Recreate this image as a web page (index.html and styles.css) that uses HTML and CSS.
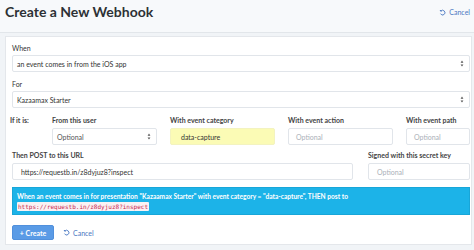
FILE: index.html
```html
<!DOCTYPE html>
<html>
<head>
<meta charset="utf-8">
<link rel="stylesheet" href="styles.css">
</head>
<body>
<div class="header">
  <h1 class="title">Create a New Webhook</h1>
  <a class="link header-cancel"><svg class="undo" viewBox="0 0 10 10"><path d="M2.6 3.2 A3.3 3.3 0 1 1 2.2 6.6" fill="none" stroke="currentColor" stroke-width="1.3"/><path d="M0.8 1.6 L3.6 1.4 L3.2 4.4 Z" fill="currentColor"/></svg>Cancel</a>
</div>
<div class="card">
  <div class="field">
    <div class="label">When</div>
    <div class="select"><span>an event comes in from the iOS app</span><svg class="arrows" viewBox="0 0 4 8"><path d="M2 0.5 L3.6 3 H0.4 Z M2 7.5 L3.6 5 H0.4 Z" fill="#555"/></svg></div>
  </div>
  <div class="field">
    <div class="label">For</div>
    <div class="select"><span>Kazaamax Starter</span><svg class="arrows" viewBox="0 0 4 8"><path d="M2 0.5 L3.6 3 H0.4 Z M2 7.5 L3.6 5 H0.4 Z" fill="#555"/></svg></div>
  </div>
  <div class="filters">
    <div class="label bold ifit">If it is:</div>
    <div class="col">
      <div class="label bold">From this user</div>
      <div class="select small"><span class="muted">Optional</span><svg class="arrows" viewBox="0 0 4 8"><path d="M2 0.5 L3.6 3 H0.4 Z M2 7.5 L3.6 5 H0.4 Z" fill="#555"/></svg></div>
    </div>
    <div class="col">
      <div class="label bold">With event category</div>
      <div class="input yellow">data-capture</div>
    </div>
    <div class="col">
      <div class="label bold">With event action</div>
      <div class="input placeholder">Optional</div>
    </div>
    <div class="col">
      <div class="label bold">With event path</div>
      <div class="input placeholder">Optional</div>
    </div>
  </div>
  <div class="post">
    <div class="col">
      <div class="label bold">Then POST to this URL</div>
      <div class="input url">https://requestb.in/z8dyjuz8?inspect</div>
    </div>
    <div class="col">
      <div class="label bold">Signed with this secret key</div>
      <div class="input placeholder url">Optional</div>
    </div>
  </div>
  <div class="alert">
    <div>When an event comes in for presentation "Kazaamax Starter" with event category = "data-capture", THEN post to</div>
    <code>https://requestb.in/z8dyjuz8?inspect</code>
  </div>
  <div class="actions">
    <button class="btn">+ Create</button>
    <a class="link"><svg class="undo" viewBox="0 0 10 10"><path d="M2.6 3.2 A3.3 3.3 0 1 1 2.2 6.6" fill="none" stroke="currentColor" stroke-width="1.3"/><path d="M0.8 1.6 L3.6 1.4 L3.2 4.4 Z" fill="currentColor"/></svg>Cancel</a>
  </div>
</div>
</body>
</html>
```
FILE: styles.css
```css
* { box-sizing: border-box; }
html, body { margin: 0; padding: 0; }
body {
  width: 474px;
  height: 250px;
  overflow: hidden;
  background: #f1f4f7;
  font-family: Lato, "Open Sans", sans-serif;
  color: #333;
}
.header {
  height: 33px;
  background: #f7f9fb;
  border-bottom: 1px solid #e2e6ea;
  display: flex;
  align-items: center;
  justify-content: space-between;
  padding: 0 4px 0 5px;
}
.title {
  margin: 0;
  font-size: 14px;
  font-weight: 700;
  color: #2d3135;
  position: relative;
  top: -5px;
}
.link {
  display: inline-flex;
  align-items: center;
  gap: 3px;
  font-size: 7px;
  color: #4a78c2;
}
.header-cancel { position: relative; top: -4px; }
.undo { width: 7px; height: 7px; }
.card {
  margin: 3px 2px 0 5px;
  background: #fff;
  border: 1px solid #e4e7eb;
  height: 209px;
  padding: 7px 1px 0 6px;
}
.label {
  font-size: 7px;
  line-height: 9px;
  color: #333;
  white-space: nowrap;
}
.bold { font-weight: 700; color: #444; }
.field { margin-bottom: 8px; }
.field .label { margin-bottom: 2px; }
.select, .input {
  height: 17px;
  border: 1px solid #e1e5ea;
  border-radius: 2px;
  background: #fff;
  font-size: 7px;
  display: flex;
  align-items: center;
  padding: 0 5px 0 4px;
  color: #333;
  white-space: nowrap;
}
.select { justify-content: space-between; }
.select .muted { color: #555; }
.arrows { width: 4px; height: 7px; }
.filters {
  display: grid;
  grid-template-columns: 27px 105px 105px 105px 1fr;
  column-gap: 13px;
  margin-top: 2px;
}
.ifit { margin-left: -2px; }
.col .label { margin-bottom: 3px; }
.yellow { background: #fbfbb5; border-color: #f3f3c0; padding-left: 10px; }
.placeholder { color: #aab0b8; padding-left: 7px; }
.url { padding-left: 8px; }
.post {
  display: grid;
  grid-template-columns: 1fr 102px;
  column-gap: 15px;
  margin-top: 6px;
}
.alert {
  margin-top: 7px;
  background: #1cb3e8;
  border: 1px solid #18a6d8;
  height: 28px;
  padding: 4px 4px 0;
  color: #fff;
  font-size: 6.6px;
  font-weight: 700;
  line-height: 9px;
}
.alert code {
  display: inline-block;
  margin-top: 1px;
  background: #f9f2f4;
  color: #c7254e;
  font-family: "DejaVu Sans Mono", "Liberation Mono", monospace;
  font-weight: 400;
  font-size: 6px;
  line-height: 9px;
  padding: 0 1px;
  border-radius: 1px;
}
.actions {
  display: flex;
  align-items: center;
  gap: 9px;
  margin-top: 10px;
}
.btn {
  width: 42px;
  height: 15px;
  background: #5a9be6;
  border: 1px solid #5190dc;
  border-radius: 2px;
  color: #fff;
  font-family: Lato, sans-serif;
  font-size: 7px;
  font-weight: 700;
  padding: 0;
}
```
